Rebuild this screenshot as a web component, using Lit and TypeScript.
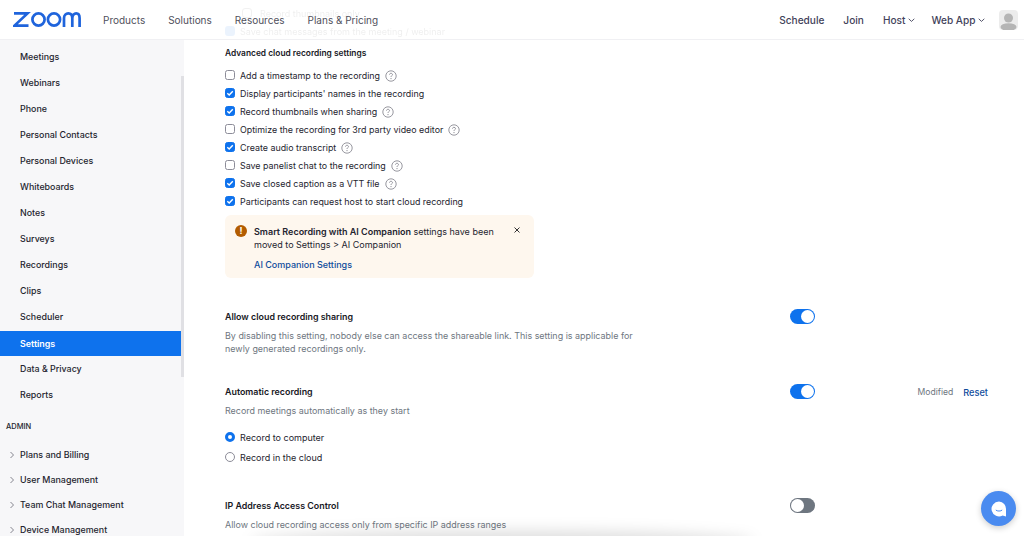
import { LitElement, html, css, svg } from "lit";
import { customElement } from "lit/decorators.js";

const SIDE = ["Meetings","Webinars","Phone","Personal Contacts","Personal Devices","Whiteboards","Notes","Surveys","Recordings","Clips","Scheduler","Settings","Data & Privacy","Reports"];
const ADMIN = ["Plans and Billing","User Management","Team Chat Management","Device Management"];
const CHECKS: [string, boolean, boolean][] = [
  ["Add a timestamp to the recording", false, true],
  ["Display participants' names in the recording", true, false],
  ["Record thumbnails when sharing", true, true],
  ["Optimize the recording for 3rd party video editor", false, true],
  ["Create audio transcript", true, true],
  ["Save panelist chat to the recording", false, true],
  ["Save closed caption as a VTT file", true, true],
  ["Participants can request host to start cloud recording", true, false],
];

const chev = svg`<svg class="chev" width="7" height="8" viewBox="0.5 0 7 8"><path d="M1.2 2.8 L4 5.4 L6.8 2.8" fill="none" stroke="currentColor" stroke-width=".9"/></svg>`;
const help = html`<svg class="help" width="12" height="12" viewBox="0 0 12 12"><circle cx="6" cy="6" r="5.2" fill="none" stroke="#7d7d88" stroke-width=".8"/><path d="M4.5 4.7 C4.5 3.7 5.2 3.3 6 3.3 C6.9 3.3 7.5 3.9 7.5 4.6 C7.5 5.6 6 5.6 6 7" fill="none" stroke="#7d7d88" stroke-width=".8"/><circle cx="6" cy="8.6" r=".55" fill="#7d7d88"/></svg>`;

@customElement("app-root")
export class AppRoot extends LitElement {
  static styles = css`
    :host { display: block; width: 1024px; height: 536px; overflow: hidden; position: relative; background: #fff; font-family: Inter, "Liberation Sans", sans-serif; color: #24242e; -webkit-font-smoothing: antialiased; }
    .header { position: absolute; inset: 0 0 auto 0; height: 40px; background: #ffffff; border-bottom: 1px solid #f0f0f3; box-sizing: border-box; display: flex; align-items: center; padding: 0 6px 0 13px; z-index: 2; }
    .ghost { position: absolute; left: 225px; top: 0; height: 40px; opacity: .08; font-size: 9px; color: #333; pointer-events: none; }
    .ghost div { display: flex; align-items: center; gap: 5px; height: 18px; }
    .ghost .row1 { margin-top: 4px; padding-left: 17px; gap: 8px; }
    .ghost i { width: 10px; height: 10px; border-radius: 3px; background: #0e72ed; display: block; }
    .ghost .row1 i { background: #fff; border: 1px solid #555; box-sizing: border-box; }
    .logo { width: 68px; height: 15px; display: block; color: #1f64dc; }
    .nav { display: flex; margin-left: 22px; font-size: 10px; color: #50505c; gap: 23px; font-weight: 400; }
    .right { margin-left: auto; display: flex; align-items: center; font-size: 10.1px; font-weight: 500; color: #42425a; }
    .right span { display: flex; align-items: center; gap: 2.5px; }
    .right .g1 { margin-left: 19px; }
    .right .g2 { margin-left: 16.5px; }
    .avatar { width: 19px; height: 20px; background: #ececec; border-radius: 4px; margin-left: 14px; overflow: hidden; display: block; }
    .chev { margin-top: 1px; }
    .body { display: flex; height: 536px; padding-top: 40px; box-sizing: border-box; }
    .side { width: 184px; flex: none; background: #f7f7f9; position: relative; font-size: 8.9px; font-weight: 500; color: #24242e; box-sizing: border-box; padding-top: 3px; }
    .item { height: 26px; display: flex; align-items: center; padding-left: 20px; width: 181px; box-sizing: border-box; }
    .item.on { background: #0e72ed; color: #fff; font-weight: 600; height: 25px; margin: 2px 0 -1px; padding-bottom: 1px; }
    .label { margin: 13px 0 0 6px; font-size: 7.5px; height: 14px; line-height: 14px; font-weight: 500; }
    .adm { height: 25px; display: flex; align-items: center; padding-left: 20px; position: relative; }
    .adm svg { position: absolute; left: 9px; top: 9px; color: #85858f; }
    .admins { margin-top: 8px; }
    .thumb { position: absolute; right: 0; top: 36px; width: 3px; height: 301px; background: #e0e0e4; }
    .main { flex: 1; padding: 0 0 0 41px; font-size: 9px; color: #24242e; position: relative; }
    .h { font-weight: 600; font-size: 8.4px; height: 12px; line-height: 12px; margin-top: 7px; color: #18181f; }
    .checks { margin-top: 7px; font-size: 8.9px; }
    .ck { display: flex; align-items: center; height: 18px; }
    .box { width: 10px; height: 10px; box-sizing: border-box; border: 1px solid #8c8c98; border-radius: 2.5px; margin-right: 5px; flex: none; background: #fff; display: block; }
    .box.on { background: #0e72ed; border-color: #0e72ed; }
    .box svg { display: block; margin: -1px; }
    .help { margin-left: 5px; margin-top: 1px; }
    .note { width: 309px; height: 63px; margin-top: 5px; background: #fef7ee; border-radius: 6px; box-sizing: border-box; padding: 10px 0 0 29px; position: relative; line-height: 13px; }
    .note b { font-weight: 600; }
    .note p { margin: 0; width: 260px; }
    .warn { position: absolute; left: 10px; top: 10px; width: 12px; height: 12px; border-radius: 50%; background: #b35c00; color: #fff; font-size: 9px; font-weight: 700; text-align: center; line-height: 12px; }
    .x { position: absolute; right: 13px; top: 11px; display: block; }
    .note a { display: block; color: #0f4c9c; font-weight: 500; margin-top: 6.5px; }
    .sec { display: flex; align-items: center; height: 20px; box-sizing: border-box; padding-bottom: 1px; position: relative; width: 763px; }
    .s1 { margin-top: 29px; }
    .s2 { margin-top: 27px; }
    .s3 { margin-top: 28px; }
    .t { font-weight: 600; font-size: 8.9px; color: #18181f; }
    .d { font-size: 8.95px; color: #6e7680; line-height: 13px; margin-top: 2px; }
    .wide { width: 420px; }
    .sw { position: absolute; left: 565px; top: 2px; width: 25px; height: 15px; border-radius: 8px; background: #0e72ed; box-sizing: border-box; }
    .sw::after { content: ""; position: absolute; right: 1px; top: 1px; width: 13px; height: 13px; background: #fff; border-radius: 50%; }
    .sw.off { background: #6e7680; }
    .sw.off::after { right: auto; left: 1px; }
    .mod { position: absolute; right: 0; top: 0; height: 20px; display: flex; align-items: center; gap: 10px; font-size: 8.6px; color: #6e7680; }
    .mod a { color: #0f4c9c; font-size: 9.2px; font-weight: 500; }
    .radio { display: flex; align-items: center; height: 20px; gap: 5px; box-sizing: border-box; padding-bottom: 1px; }
    .r1 { margin-top: 10.5px; }
    .dot { width: 10px; height: 10px; box-sizing: border-box; border-radius: 50%; border: 1px solid #8c8c98; display: block; flex: none; }
    .dot.on { border: 3px solid #0e72ed; }
    .chat { position: absolute; right: 8px; bottom: 10px; width: 35px; height: 35px; border-radius: 50%; background: #4a8bf0; box-shadow: 0 2px 6px rgba(0,0,0,.2); z-index: 3; display: flex; align-items: center; justify-content: center; }
    .shade { position: absolute; left: 250px; right: 270px; bottom: -16px; height: 22px; border-radius: 50%; background: rgba(0,0,0,.12); filter: blur(7px); z-index: 1; }
  `;

  render() {
    return html`
      <div class="header">
        <div class="ghost"><div class="row1"><i></i>Record thumbnails only</div><div><i></i>Save chat messages from the meeting / webinar</div></div>
        <svg class="logo" viewBox="0 0 68 15" fill="none" stroke="currentColor" stroke-width="2.7"><path d="M1 1.4 H14.5 L1.5 13.6 H15.5"/><circle cx="25.5" cy="7.5" r="6.1"/><circle cx="41" cy="7.5" r="6.1"/><path d="M51 15 V6.2 C51 3 53 1.4 55.3 1.4 C57.7 1.4 59.3 3 59.3 6.2 V15 M59.3 6.2 C59.3 3 61.2 1.4 63.2 1.4 C65.3 1.4 66.6 3 66.6 6.2 V15"/></svg>
        <div class="nav"><span>Products</span><span>Solutions</span><span>Resources</span><span>Plans &amp; Pricing</span></div>
        <div class="right">
          <span>Schedule</span><span class="g1">Join</span><span class="g1">Host${chev}</span><span class="g2">Web App${chev}</span>
          <svg class="avatar" viewBox="0 0 19 20"><circle cx="9.5" cy="8" r="4.5" fill="#b5b5b5"/><ellipse cx="9.5" cy="17" rx="8" ry="3.8" fill="#b5b5b5"/></svg>
        </div>
      </div>
      <div class="body">
        <div class="side">
          ${SIDE.map(s => html`<div class="item ${s === "Settings" ? "on" : ""}">${s}</div>`)}
          <div class="label">ADMIN</div>
          <div class="admins">${ADMIN.map(s => html`<div class="adm"><svg width="6" height="8" viewBox="0 0 6 8"><path d="M1.5 1 L4.5 4 L1.5 7" fill="none" stroke="currentColor"/></svg>${s}</div>`)}</div>
          <div class="thumb"></div>
        </div>
        <div class="main">
          <div class="h">Advanced cloud recording settings</div>
          <div class="checks">
            ${CHECKS.map(([t, on, h]) => html`<div class="ck"><span class="box ${on ? "on" : ""}">${on ? html`<svg width="10" height="10" viewBox="0 0 10 10"><path d="M2.3 5.2 L4.2 7 L7.8 3.2" fill="none" stroke="#fff" stroke-width="1.4"/></svg>` : ""}</span>${t}${h ? help : ""}</div>`)}
          </div>
          <div class="note">
            <span class="warn">!</span>
            <svg class="x" width="8" height="8" viewBox="0 0 8 8"><path d="M1.5 1.5 L6.5 6.5 M6.5 1.5 L1.5 6.5" stroke="#333" stroke-width="1"/></svg>
            <p><b>Smart Recording with AI Companion</b> settings have been moved to Settings &gt; AI Companion</p>
            <a>AI Companion Settings</a>
          </div>
          <div class="sec s1"><span class="t">Allow cloud recording sharing</span><span class="sw"></span></div>
          <div class="d wide">By disabling this setting, nobody else can access the shareable link. This setting is applicable for newly generated recordings only.</div>
          <div class="sec s2"><span class="t">Automatic recording</span><span class="sw"></span><span class="mod">Modified <a>Reset</a></span></div>
          <div class="d">Record meetings automatically as they start</div>
          <div class="radio r1"><span class="dot on"></span>Record to computer</div>
          <div class="radio"><span class="dot"></span>Record in the cloud</div>
          <div class="sec s3"><span class="t">IP Address Access Control</span><span class="sw off"></span></div>
          <div class="d">Allow cloud recording access only from specific IP address ranges</div>
        </div>
      </div>
      <div class="shade"></div>
      <div class="chat"><svg width="18" height="18" viewBox="0 0 18 18"><path d="M9 1.5 A7.5 7.5 0 1 0 12.6 15.6 L16 16.6 L16 9.6 A7.5 7.5 0 0 0 9 1.5 Z" fill="#fff"/><path d="M5.8 10 C7 11.4 11 11.4 12.2 10" fill="none" stroke="#4a8bf0" stroke-width="1"/></svg></div>
    `;
  }
}
